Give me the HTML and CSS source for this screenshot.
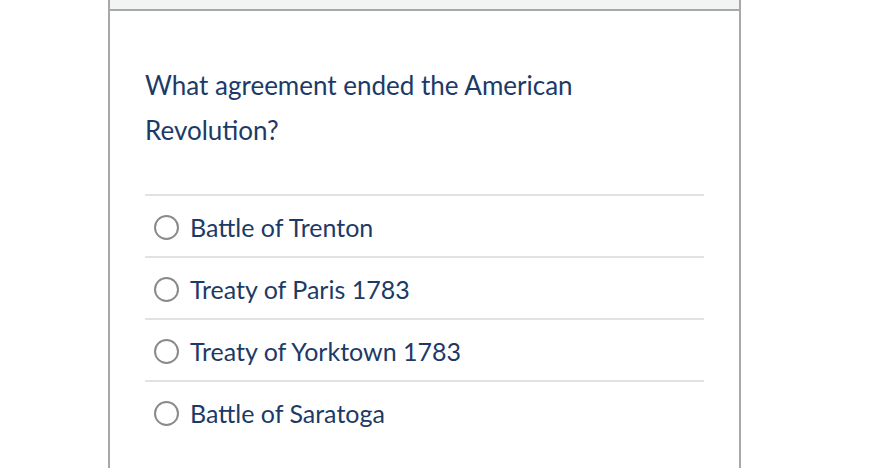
FILE: index.html
```html
<!DOCTYPE html>
<html lang="en">
<head>
  <meta charset="UTF-8" />
  <title>Quiz question</title>
  <link rel="stylesheet" href="styles.css">
</head>
<body>
  <div class="card">
    <div class="card-header"></div>
    <div class="card-body">
      <p class="question">What agreement ended the American Revolution?</p>
      <ul class="answers">
        <li><label><span class="radio"></span>Battle of Trenton</label></li>
        <li><label><span class="radio"></span>Treaty of Paris 1783</label></li>
        <li><label><span class="radio"></span>Treaty of Yorktown 1783</label></li>
        <li><label><span class="radio"></span>Battle of Saratoga</label></li>
      </ul>
    </div>
  </div>
</body>
</html>
```

FILE: styles.css
```css
:root {
  --navy: #1d3a66;
  --border: #a8a8a8;
  --rule: #e2e2e2;
}
* {
  box-sizing: border-box;
}
body {
  margin: 0;
  font-family: Lato, 'Liberation Sans', sans-serif;
  background: #fff;
  color: var(--navy);
  overflow: hidden;
}
.card {
  margin-left: 108px;
  width: 633px;
  height: 480px;
  border-left: 2px solid var(--border);
  border-right: 2px solid var(--border);
}
.card-header {
  height: 11px;
  background: #f2f3f3;
  border-bottom: 2px solid var(--border);
}
.card-body {
  padding: 52px 36px 0 35px;
}
.question {
  margin: 0;
  width: 480px;
  font-size: 26px;
  line-height: 45px;
}
.answers {
  list-style: none;
  margin: 41px 0 0;
  padding: 0;
  width: 559px;
}
.answers li {
  border-top: 2px solid var(--rule);
  height: 62px;
}
.answers label {
  display: flex;
  align-items: center;
  height: 60px;
  font-size: 25px;
  padding: 2px 0 0 9px;
}
.radio {
  width: 25px;
  height: 25px;
  border: 2.5px solid #8a8a8a;
  border-radius: 50%;
  margin-right: 11px;
  flex: none;
}
```
